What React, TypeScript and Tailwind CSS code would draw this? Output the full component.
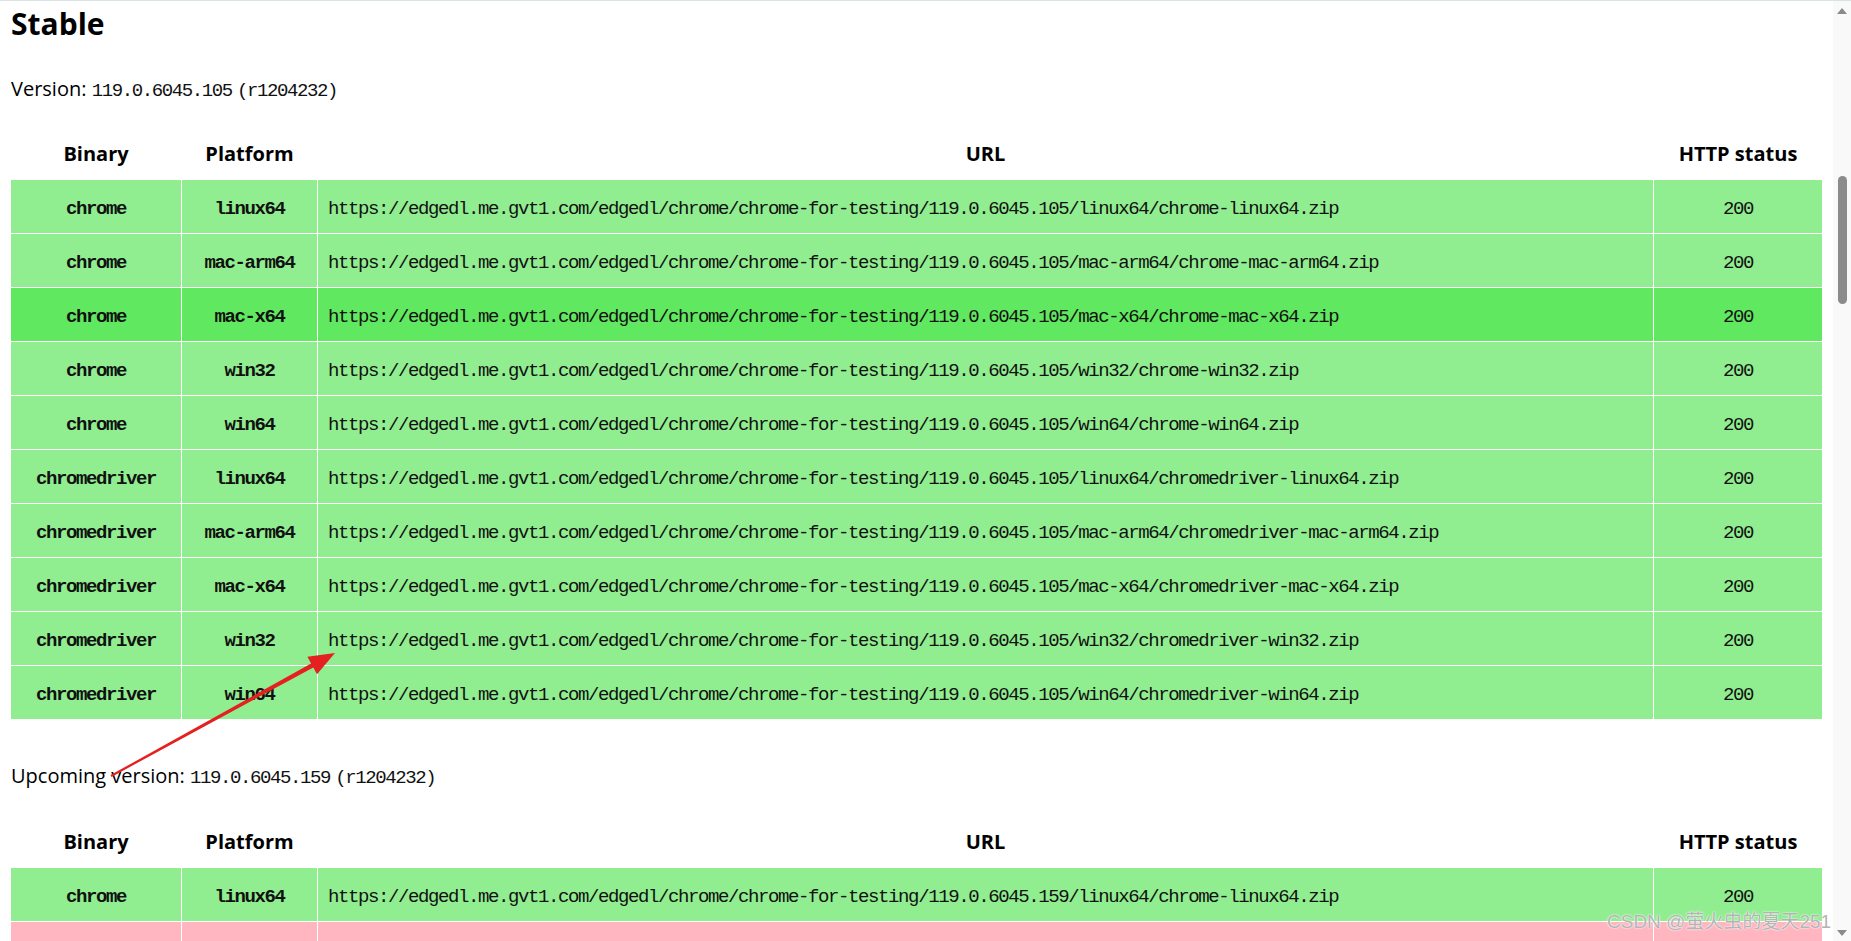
const stable = "119.0.6045.105";
const upcoming = "119.0.6045.159";

const base = "https://edgedl.me.gvt1.com/edgedl/chrome/chrome-for-testing";

type Row = { binary: string; platform: string; status: number; hot?: boolean };

const stableRows: Row[] = [
  { binary: "chrome", platform: "linux64", status: 200 },
  { binary: "chrome", platform: "mac-arm64", status: 200 },
  { binary: "chrome", platform: "mac-x64", status: 200, hot: true },
  { binary: "chrome", platform: "win32", status: 200 },
  { binary: "chrome", platform: "win64", status: 200 },
  { binary: "chromedriver", platform: "linux64", status: 200 },
  { binary: "chromedriver", platform: "mac-arm64", status: 200 },
  { binary: "chromedriver", platform: "mac-x64", status: 200 },
  { binary: "chromedriver", platform: "win32", status: 200 },
  { binary: "chromedriver", platform: "win64", status: 200 },
];

const upcomingRows: Row[] = [
  { binary: "chrome", platform: "linux64", status: 200 },
  { binary: "chrome", platform: "mac-arm64", status: 404 },
];

const Mono = ({ children }: { children: React.ReactNode }) => (
  <code className="font-['Liberation_Mono',monospace] text-[19px] tracking-[-1.4px] text-[#111]">
    {children}
  </code>
);

const BuildTable = ({ version, rows }: { version: string; rows: Row[] }) => {
  return (
    <table className="w-full table-fixed border-separate border-spacing-[1px]">
      <thead>
        <tr className="h-[53px] text-[20px] font-bold text-black">
          <th className="w-[170px] pt-[2px]">Binary</th>
          <th className="w-[135px] pt-[2px]">Platform</th>
          <th className="pt-[2px]">URL</th>
          <th className="w-[168px] pt-[2px]">HTTP status</th>
        </tr>
      </thead>
      <tbody>
        {rows.map((r) => {
          const bg = r.status !== 200 ? "bg-[#ffb6c1]" : r.hot ? "bg-[#60e860]" : "bg-[#90ee90]";
          return (
            <tr key={r.binary + r.platform} className={`h-[53px] ${bg}`}>
              <th className="pt-[5px] font-bold">
                <Mono>{r.binary}</Mono>
              </th>
              <th className="pt-[5px] font-bold">
                <Mono>{r.platform}</Mono>
              </th>
              <td className="pt-[5px] pl-[10px] whitespace-nowrap">
                <Mono>
                  {base}/{version}/{r.platform}/{r.binary}-{r.platform}.zip
                </Mono>
              </td>
              <td className="pt-[5px] text-center">
                <Mono>{r.status}</Mono>
              </td>
            </tr>
          );
        })}
      </tbody>
    </table>
  );
};

const Scrollbar = () => (
  <div className="flex w-[18px] flex-col items-center bg-[#f9f9f9]">
    <div className="mt-[7px] h-0 w-0 border-x-[5px] border-b-[6px] border-x-transparent border-b-[#8a8a8a]" />
    <div className="mt-[162px] ml-[1px] h-[128px] w-[9px] rounded-full bg-[#8b8b8b]" />
    <div className="flex-1" />
    <div className="mb-[5px] h-0 w-0 border-x-[5px] border-t-[6px] border-x-transparent border-t-[#8a8a8a]" />
  </div>
);

export default function App() {
  return (
    <div className="relative flex h-[941px] overflow-hidden border-t border-[#d8e4e4] bg-white font-['Open_Sans',sans-serif] text-black">
      <div className="relative flex-1 overflow-hidden px-[10px]">
        <h2 className="mt-[3px] pl-[1px] text-[30px] leading-[40px] font-bold">Stable</h2>
        <p className="mt-[31px] pl-[1px] text-[20px] leading-[28px]">
          Version: <Mono>{stable}</Mono> <Mono>(r1204232)</Mono>
        </p>
        <div className="mt-[20px]">
          <BuildTable version={stable} rows={stableRows} />
        </div>
        <p className="mt-[42px] pl-[1px] text-[20px] leading-[28px]">
          Upcoming version: <Mono>{upcoming}</Mono> <Mono>(r1204232)</Mono>
        </p>
        <div className="mt-[21px]">
          <BuildTable version={upcoming} rows={upcomingRows} />
        </div>

        {/* annotation arrow */}
        <svg className="pointer-events-none absolute top-0 left-0" width="400" height="800">
          <polygon
            points="110.5,774.1 311.1,662.6 307.4,655.7 335,652 317,673.3 313.3,666.4 111.5,775.9"
            fill="#e42020"
          />
        </svg>
      </div>
      <Scrollbar />

      {/* watermark */}
      <div className="pointer-events-none absolute top-[907px] left-[1607px] text-[19px] whitespace-nowrap text-[#b4b4b4] [text-shadow:0_0_2px_#fff,0_0_1px_#fff] font-['Liberation_Sans','Noto_Sans_CJK_SC',sans-serif]">
        CSDN @萤火虫的夏天251
      </div>
    </div>
  );
}
